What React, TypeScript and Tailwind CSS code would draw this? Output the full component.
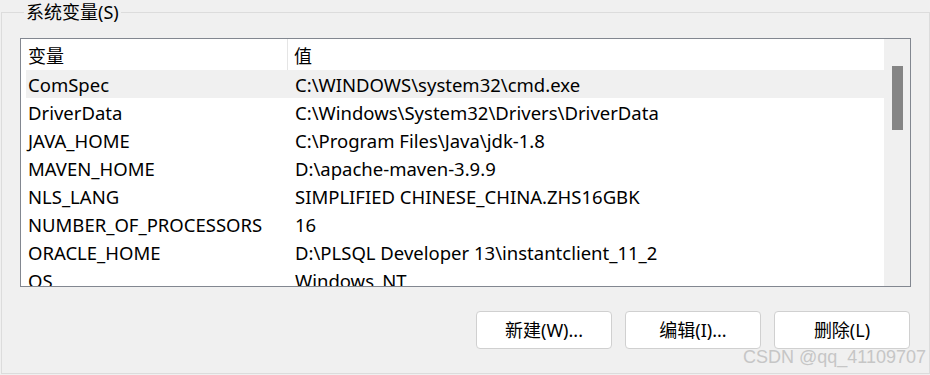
import React from 'react';

const rows: [string, string][] = [
    ['ComSpec', 'C:\\WINDOWS\\system32\\cmd.exe'],
    ['DriverData', 'C:\\Windows\\System32\\Drivers\\DriverData'],
    ['JAVA_HOME', 'C:\\Program Files\\Java\\jdk-1.8'],
    ['MAVEN_HOME', 'D:\\apache-maven-3.9.9'],
    ['NLS_LANG', 'SIMPLIFIED CHINESE_CHINA.ZHS16GBK'],
    ['NUMBER_OF_PROCESSORS', '16'],
    ['ORACLE_HOME', 'D:\\PLSQL Developer 13\\instantclient_11_2'],
    ['OS', 'Windows_NT'],
];

const font = { fontFamily: '"Noto Sans", "Noto Sans CJK SC", sans-serif' };

export default function App() {
    return (
        <div className="w-[930px] h-[375px] bg-[#f0f0f0] pt-0 pl-[1px] text-[#000]" style={font}>
            <fieldset className="w-[929px] h-[374px] border border-[#dcdcdc] pl-[18px] pr-[18px]">
                <legend className="ml-[4px] px-[2px] text-[18px] leading-[24px]">系统变量(S)</legend>

                {/* list view */}
                <div className="mt-[14px] h-[249px] border border-[#828790] bg-white flex overflow-hidden">
                    <div className="flex-1 min-w-0 pl-[5px]">
                        <div className="h-[31px] flex text-[18px] leading-[34px]">
                            <div className="w-[262px] pl-[2px] border-r border-[#e5e5e5]">变量</div>
                            <div className="pl-[6px]">值</div>
                        </div>
                        {rows.map(([name, value], i) => (
                            <div
                                key={name}
                                className={`h-[28px] flex text-[18.5px] leading-[29px] whitespace-nowrap ${i === 0 ? 'bg-[#f0f0f0]' : ''}`}
                            >
                                <div className="w-[262px] pl-[2px]">{name}</div>
                                <div className="pl-[7px]">{value}</div>
                            </div>
                        ))}
                    </div>
                    {/* scrollbar */}
                    <div className="w-[26px] bg-[#f0f0f0] pt-[27px] flex justify-center">
                        <div className="w-[11px] h-[64px] bg-[#858585]" />
                    </div>
                </div>

                <div className="mt-[24px] flex justify-end gap-[13px] pr-[1px]">
                    {['新建(W)...', '编辑(I)...', '删除(L)'].map(label => (
                        <button
                            key={label}
                            className="w-[136px] h-[38px] bg-white border border-[#d0d0d0] rounded-[4px] text-[18px]"
                        >
                            {label}
                        </button>
                    ))}
                </div>
            </fieldset>
            <div
                className="absolute left-[743px] top-[345px] text-[18px] text-[#c6c6c6] leading-[24px]"
                style={{ fontFamily: '"Liberation Sans", Arial, sans-serif' }}
            >
                CSDN @qq_41109707
            </div>
        </div>
    );
}
